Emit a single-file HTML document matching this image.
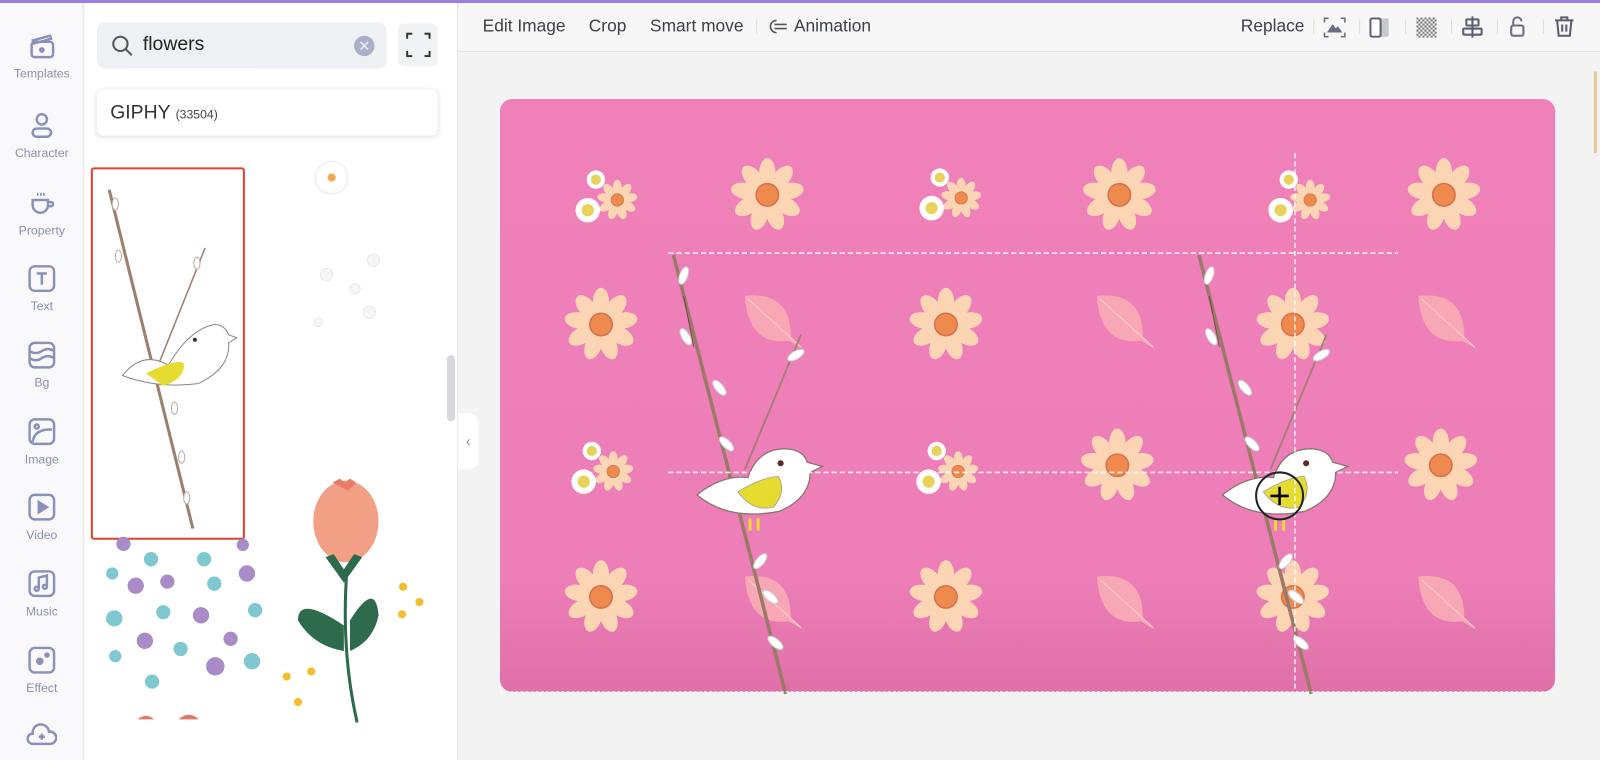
<!DOCTYPE html>
<html><head><meta charset="utf-8"><style>
*{margin:0;padding:0;box-sizing:border-box}
body{width:1600px;height:745px;overflow:hidden;background:#f3f3f4;font-family:"Liberation Sans",sans-serif;position:relative}
#w{position:absolute;left:0;top:0;width:1568px;height:730px;transform:scale(1.0204);transform-origin:0 0}
.topline{position:absolute;left:0;top:0;width:1568px;height:3px;background:#9a7fe0}
.side{position:absolute;left:0;top:3px;width:82px;height:742px;background:#f9f9fb;border-right:1px solid #e6e6ea}
.si{position:absolute;left:0;width:82px;text-align:center;color:#8a90b0;font-size:12px}
.si svg{display:block;margin:0 auto 6px}
.panel{position:absolute;left:83px;top:3px;width:365px;height:742px;background:#fff}
.search{position:absolute;left:12px;top:19px;width:284px;height:45px;background:#eef0f4;border-radius:8px}
.search span{position:absolute;left:45px;top:11px;font-size:19px;color:#222}
.exp{position:absolute;left:307px;top:20px;width:39px;height:42px;background:#f2f3f5;border-radius:6px}
.giphy{position:absolute;left:12px;top:85px;width:334px;height:45px;background:#fff;border-radius:6px;box-shadow:0 1px 5px rgba(0,0,0,.15)}
.giphy b{position:absolute;left:13px;top:12px;font-weight:normal;font-size:19px;color:#333}
.giphy i{font-style:normal;font-size:12px;color:#444}
.tb{position:absolute;left:449px;top:3px;width:1151px;height:48px;background:#f7f7f8;border-bottom:1px solid #e4e4e8}
.tb span{position:absolute;top:13px;font-size:17px;color:#3d3f4a}
.sep{position:absolute;top:16px;width:1px;height:14px;background:#ddd}
</style></head><body><div id="w">
<div class="topline"></div>
<div class="side">
 <div class="si" style="top:28px"><svg width="28" height="28" viewBox="0 0 28 28" fill="none" stroke="#8a90b8" stroke-width="2.4"><rect x="4" y="10" width="21" height="15" rx="3"/><path d="M4 9 L22 4 L23 7 L5 12" /><circle cx="14" cy="18" r="1.6" fill="#8a90b8"/></svg>Templates</div>
 <div class="si" style="top:106px"><svg width="28" height="28" viewBox="0 0 28 28" fill="none" stroke="#8a90b8" stroke-width="2.4"><circle cx="14" cy="8" r="5"/><rect x="5" y="17" width="18" height="8" rx="4"/></svg>Character</div>
 <div class="si" style="top:182px"><svg width="28" height="28" viewBox="0 0 28 28" fill="none" stroke="#8a90b8" stroke-width="2.4"><path d="M5 11h15v5a7 7 0 0 1-15 0z"/><path d="M20 13h3a2 2 0 0 1 0 4h-3"/><path d="M10 4v3M13 4v3M16 4v3" stroke-width="1.5"/></svg>Property</div>
 <div class="si" style="top:256px"><svg width="28" height="28" viewBox="0 0 28 28" fill="none" stroke="#8a90b8" stroke-width="2.4"><rect x="2" y="2" width="24" height="24" rx="5"/><path d="M9 9h10M14 9v11"/></svg>Text</div>
 <div class="si" style="top:331px"><svg width="28" height="28" viewBox="0 0 28 28" fill="none" stroke="#8a90b8" stroke-width="2.4"><rect x="2" y="2" width="24" height="24" rx="5"/><path d="M2 10q6 4 12 0t12 0M2 17q6 4 12 0t12 0"/></svg>Bg</div>
 <div class="si" style="top:406px"><svg width="28" height="28" viewBox="0 0 28 28" fill="none" stroke="#8a90b8" stroke-width="2.4"><rect x="2" y="2" width="24" height="24" rx="5"/><circle cx="9" cy="9" r="2"/><path d="M5 24q2-13 19-12"/></svg>Image</div>
 <div class="si" style="top:480px"><svg width="28" height="28" viewBox="0 0 28 28" fill="none" stroke="#8a90b8" stroke-width="2.4"><rect x="2" y="2" width="24" height="24" rx="5"/><path d="M11 9l8 5-8 5z" fill="#8a90b8"/></svg>Video</div>
 <div class="si" style="top:555px"><svg width="28" height="28" viewBox="0 0 28 28" fill="none" stroke="#8a90b8" stroke-width="2.4"><rect x="2" y="2" width="24" height="24" rx="5"/><path d="M11 19V8l8-2v11"/><circle cx="9" cy="19" r="2"/><circle cx="17" cy="17" r="2"/></svg>Music</div>
 <div class="si" style="top:630px"><svg width="28" height="28" viewBox="0 0 28 28" fill="none" stroke="#8a90b8" stroke-width="2.4"><rect x="2" y="2" width="24" height="24" rx="5"/><circle cx="12" cy="15" r="2.5" fill="#8a90b8"/><circle cx="19" cy="9" r="1.5" fill="#8a90b8"/></svg>Effect</div>
 <div class="si" style="top:704px"><svg width="30" height="24" viewBox="0 0 30 24" fill="none" stroke="#8a90b8" stroke-width="2.4"><path d="M6 22a5 5 0 0 1 0-10 8 8 0 0 1 16-2 6 6 0 0 1 2 12z"/><path d="M15 12v6M12 15h6"/></svg></div>
</div>
<div class="panel">
 <div class="search"><svg style="position:absolute;left:14px;top:12px" width="22" height="22" viewBox="0 0 22 22" fill="none" stroke="#555" stroke-width="2"><circle cx="9" cy="9" r="7"/><path d="M14 14l6 6"/></svg><span>flowers</span>
  <div style="position:absolute;left:252px;top:13px;width:20px;height:20px;border-radius:50%;background:#a9b0c8;color:#eef;font-size:14px;text-align:center;line-height:20px">✕</div></div>
 <div class="exp"><svg style="position:absolute;left:8px;top:9px" width="24" height="24" viewBox="0 0 24 24" fill="none" stroke="#333" stroke-width="2"><path d="M1 6V1h5M18 1h5v5M23 18v5h-5M6 23H1v-5"/></svg></div>
 <div class="giphy"><b>GIPHY <i>(33504)</i></b></div>
 <svg style="position:absolute;left:0;top:135px" width="365" height="607" viewBox="0 0 365 607">
  <rect x="7" y="27" width="149" height="363" fill="#fff" stroke="#e0432c" stroke-width="2" rx="2"/>
  <path d="M24 48 L106 380" stroke="#9b8070" stroke-width="3"/>
  <path d="M118 105 L72 220" stroke="#9b8070" stroke-width="1.5"/>
  <g fill="#fff" stroke="#b9a9a0"><ellipse cx="30" cy="62" rx="3" ry="6"/><ellipse cx="33" cy="113" rx="3" ry="6"/><ellipse cx="110" cy="120" rx="3" ry="6"/><ellipse cx="88" cy="262" rx="3" ry="6"/><ellipse cx="95" cy="310" rx="3" ry="6"/><ellipse cx="100" cy="350" rx="3" ry="6"/></g>
  <path d="M37 230 q20-25 45-10 q20-35 45-40 q10 0 14 10 l8 3 -8 5 q2 25 -30 40 q-40 5 -74-8z" fill="#fff" stroke="#888"/>
  <path d="M60 228 q30-15 37-10 q2 15-20 22z" fill="#e6dc30"/>
  <circle cx="108" cy="195" r="2" fill="#333"/>
  <circle cx="242" cy="36" r="4" fill="#f2a84a"/>
  <g fill="#f6f6f6" stroke="#e8e8e8"><circle cx="242" cy="36" r="16" fill="none"/><circle cx="283" cy="117" r="6"/><circle cx="237" cy="131" r="6"/><circle cx="265" cy="145" r="5"/><circle cx="279" cy="168" r="6"/><circle cx="229" cy="178" r="4"/></g>
  <g><circle cx="38" cy="395" r="7" fill="#a98bc8"/><circle cx="65" cy="410" r="7" fill="#7fc8d0"/><circle cx="117" cy="410" r="7" fill="#7fc8d0"/><circle cx="155" cy="396" r="6" fill="#a98bc8"/><circle cx="27" cy="424" r="6" fill="#7fc8d0"/><circle cx="50" cy="436" r="8" fill="#a98bc8"/><circle cx="81" cy="432" r="7" fill="#a98bc8"/><circle cx="127" cy="434" r="7" fill="#7fc8d0"/><circle cx="159" cy="424" r="8" fill="#a98bc8"/><circle cx="29" cy="468" r="8" fill="#7fc8d0"/><circle cx="77" cy="462" r="7" fill="#7fc8d0"/><circle cx="114" cy="465" r="8" fill="#a98bc8"/><circle cx="167" cy="460" r="7" fill="#7fc8d0"/><circle cx="59" cy="490" r="8" fill="#a98bc8"/><circle cx="94" cy="498" r="7" fill="#7fc8d0"/><circle cx="143" cy="488" r="7" fill="#a98bc8"/><circle cx="30" cy="505" r="6" fill="#7fc8d0"/><circle cx="128" cy="515" r="9" fill="#a98bc8"/><circle cx="164" cy="510" r="8" fill="#7fc8d0"/><circle cx="66" cy="530" r="7" fill="#7fc8d0"/></g>
  <path d="M52 567 q8-7 16 0z M92 567 q10-9 20 0z" fill="#e07a66"/>
  <ellipse cx="256" cy="373" rx="32" ry="40" fill="#f2a085"/>
  <path d="M243 335 l7-4 5 4 5-4 6 4-8 8z" fill="#e87a66"/>
  <path d="M244 405 l10 15 10-15 8 3 -18 25 -18-25z" fill="#2d6b4c"/>
  <path d="M257 420 q-6 80 10 150" stroke="#2d6b4c" stroke-width="3" fill="none"/>
  <path d="M254 475 q-45-30-45-5 q15 25 45 30z M260 470 q25-40 28-5 q-5 25-28 35z" fill="#2d6b4c"/>
  <g fill="#f3be2e"><circle cx="312" cy="437" r="4"/><circle cx="328" cy="452" r="4"/><circle cx="311" cy="464" r="4"/><circle cx="198" cy="525" r="4"/><circle cx="222" cy="520" r="4"/><circle cx="209" cy="550" r="4"/></g>
  <rect x="355" y="210" width="8" height="65" rx="4" fill="#d8d8dc"/>
 </svg>
</div>
<div style="position:absolute;left:448px;top:3px;width:1px;height:742px;background:#e6e6ea"></div>
<div style="position:absolute;left:449px;top:405px;width:20px;height:55px;background:#fff;border-radius:0 10px 10px 0;color:#8a90b0;font-size:14px;line-height:55px;text-align:center">‹</div>
<div class="tb">
 <span style="left:24px">Edit Image</span><span style="left:128px">Crop</span><span style="left:188px">Smart move</span>
 <div class="sep" style="left:292px"></div>
 <svg style="position:absolute;left:301px;top:14px" width="22" height="18" viewBox="0 0 22 18" fill="none" stroke="#555" stroke-width="1.6"><path d="M11 3a6 6 0 1 0 0 12"/><path d="M9 7h12M9 11h12"/></svg>
 <span style="left:329px">Animation</span>
 <span style="left:767px">Replace</span>
 <svg style="position:absolute;left:848px;top:14px" width="22" height="20" viewBox="0 0 22 20" fill="none" stroke="#6a6e80" stroke-width="1.6"><path d="M1 5V1h4M17 1h4v4M21 15v4h-4M5 19H1v-4"/><path d="M5 14l4-6 3 4 2-2 3 4z" fill="#6a6e80"/></svg>
 <svg style="position:absolute;left:893px;top:14px" width="20" height="20" viewBox="0 0 20 20"><rect x="1" y="1" width="18" height="18" rx="2" fill="#c8c8d0"/><rect x="1" y="1" width="10" height="18" rx="2" fill="#fff" stroke="#5a5e70" stroke-width="2"/></svg>
 <svg style="position:absolute;left:939px;top:14px" width="20" height="20" viewBox="0 0 20 20" fill="#777"><pattern id="ck" width="4" height="4" patternUnits="userSpaceOnUse"><rect width="2" height="2"/><rect x="2" y="2" width="2" height="2"/></pattern><rect width="20" height="20" fill="url(#ck)"/></svg>
 <svg style="position:absolute;left:983px;top:12px" width="22" height="22" viewBox="0 0 22 22" fill="none" stroke="#5a5e70" stroke-width="2"><rect x="5" y="4" width="12" height="6" rx="1"/><rect x="2" y="13" width="18" height="6" rx="1"/><path d="M11 1v21"/></svg>
 <svg style="position:absolute;left:1030px;top:12px" width="16" height="22" viewBox="0 0 16 22" fill="none" stroke="#6a6e80" stroke-width="2"><path d="M4 10V6a4 4 0 0 1 8 0"/><rect x="2" y="10" width="12" height="10" rx="2"/></svg>
 <svg style="position:absolute;left:1074px;top:12px" width="20" height="22" viewBox="0 0 20 22" fill="none" stroke="#5a5e70" stroke-width="2"><path d="M1 5h18M7 5V2h6v3M3 5l1.5 15h11L17 5M8 9v7M12 9v7"/></svg>
 <div class="sep" style="left:838px"></div><div class="sep" style="left:883px"></div><div class="sep" style="left:928px"></div><div class="sep" style="left:973px"></div><div class="sep" style="left:1018px"></div><div class="sep" style="left:1063px"></div>
</div>
<div style="position:absolute;left:1562px;top:70px;width:3px;height:80px;background:#e8c898"></div>
<svg style="position:absolute;left:0;top:0" width="1568" height="730">
 <defs>
  <linearGradient id="pg" x1="0" y1="0" x2="0" y2="1"><stop offset="0" stop-color="#ef80b9"/><stop offset=".8" stop-color="#ee7eb7"/><stop offset="1" stop-color="#e070a8"/></linearGradient>
  <g id="fl"><g fill="#fcd5b4"><ellipse cx="0" cy="-22" rx="8" ry="14"/><ellipse cx="0" cy="-22" rx="8" ry="14" transform="rotate(40)"/><ellipse cx="0" cy="-22" rx="8" ry="14" transform="rotate(80)"/><ellipse cx="0" cy="-22" rx="8" ry="14" transform="rotate(120)"/><ellipse cx="0" cy="-22" rx="8" ry="14" transform="rotate(160)"/><ellipse cx="0" cy="-22" rx="8" ry="14" transform="rotate(200)"/><ellipse cx="0" cy="-22" rx="8" ry="14" transform="rotate(240)"/><ellipse cx="0" cy="-22" rx="8" ry="14" transform="rotate(280)"/><ellipse cx="0" cy="-22" rx="8" ry="14" transform="rotate(320)"/></g><circle r="11" fill="#ef8a4f" stroke="#d8704a" stroke-width="1.5"/></g>
  <g id="sm"><use href="#fl" transform="translate(29,0) scale(.55)"/><g transform="translate(0,10)"><circle r="12" fill="#fff"/><circle r="6" fill="#e9d25a"/></g><g transform="translate(8,-20)"><circle r="9" fill="#fff"/><circle r="5" fill="#e9d25a"/></g></g>
  <g id="lf"><path d="M-25-30 q45-5 45 40 l12 12 -14-8 q-40 5-43-44z" fill="#f8a8b4"/><path d="M-22-27 L30 20" stroke="#fcc8cc" stroke-width="1.2"/></g>
  <g id="bird"><path d="M-52 15 q25-20 50-17 q10-30 40-28 q15 2 18 13 l15 4 -12 6 q0 25 -30 38 q-50 10-81-16z" fill="#fff" stroke="#8a7570" stroke-width="1.3"/><path d="M-12 12 q25-15 40-15 q8 15-5 30 q-20 5-35-15z" fill="#e6dc30" stroke="#a99" stroke-width=".8"/><circle cx="30" cy="-16" r="3" fill="#5a2a2a"/><path d="M0 38 l0 12 M8 38 l0 12" stroke="#e6dc30" stroke-width="3"/></g>
  <g id="br"><path d="M0 0 L110 430" stroke="#9b7a68" stroke-width="3.5" fill="none"/><path d="M10 40 L20 90" stroke="#6e4a40" stroke-width="1"/><path d="M125 78 L70 210" stroke="#a08070" stroke-width="1.8"/><g fill="#fff" stroke="#ccc"><ellipse cx="10" cy="20" rx="4" ry="9" transform="rotate(20 10 20)"/><ellipse cx="12" cy="80" rx="4" ry="9" transform="rotate(-30 12 80)"/><ellipse cx="45" cy="130" rx="4" ry="9" transform="rotate(-40 45 130)"/><ellipse cx="120" cy="98" rx="4" ry="9" transform="rotate(60 120 98)"/><ellipse cx="52" cy="185" rx="4" ry="9" transform="rotate(-45 52 185)"/><ellipse cx="95" cy="335" rx="4" ry="9" transform="rotate(-50 95 335)"/><ellipse cx="85" cy="300" rx="4" ry="9" transform="rotate(40 85 300)"/><ellipse cx="100" cy="380" rx="4" ry="9" transform="rotate(-50 100 380)"/></g></g>
 </defs>
 <rect x="490" y="97" width="1034" height="581" rx="12" fill="url(#pg)"/>
 <use href="#fl" x="752" y="191"/><use href="#fl" x="1097" y="191"/><use href="#fl" x="1415" y="191"/>
 <use href="#fl" x="589" y="318"/><use href="#fl" x="927" y="318"/><use href="#fl" x="1267" y="318"/>
 <use href="#fl" x="1095" y="456"/><use href="#fl" x="1412" y="456"/>
 <use href="#fl" x="589" y="585"/><use href="#fl" x="927" y="585"/><use href="#fl" x="1267" y="585"/>
 <use href="#sm" x="576" y="196"/><use href="#sm" x="913" y="194"/><use href="#sm" x="1255" y="196"/><use href="#sm" x="572" y="462"/><use href="#sm" x="910" y="462"/>
 <use href="#lf" x="755" y="320"/><use href="#lf" x="1100" y="320"/><use href="#lf" x="1415" y="320"/><use href="#lf" x="755" y="595"/><use href="#lf" x="1100" y="595"/><use href="#lf" x="1415" y="595"/>
 <use href="#br" x="660" y="250"/><use href="#br" x="1175" y="250"/>
 <use href="#bird" x="735" y="470"/><use href="#bird" x="1250" y="470"/>
 <g stroke="#fff" stroke-width="1.5" stroke-dasharray="5 3" opacity=".85"><path d="M655 248H1370M655 463H1370M1269 150V678"/></g>
 <circle cx="1254" cy="486" r="23" fill="none" stroke="#222" stroke-width="2"/>
 <path d="M1254 477v18M1245 486h18" stroke="#000" stroke-width="2.5"/>
 <path d="M490 678H1524" stroke="#fff" stroke-width="1" stroke-dasharray="3 2"/>
</svg>
</div></body></html>
